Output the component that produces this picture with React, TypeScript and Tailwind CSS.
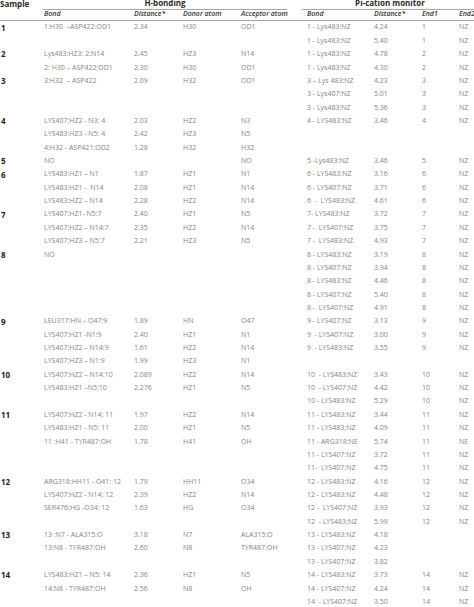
import React from "react";

const cols = "grid grid-cols-[44px_90px_49px_58px_66px_67px_48px_37px_15px]";

// sample, bond, distance, donor, acceptor, pi bond, pi distance, end1, end2
const rows: string[][] = [
    ["1", "1:H30  \u2013ASP422:OD1", "2.34", "H30", "OD1", "1 - Lys483:NZ", "4.24", "1", "NZ"],
    ["", "", "", "", "", "1 - Lys483:NZ", "5.40", "1", "NZ"],
    ["2", "Lys483:HZ3: 2:N14", "2.45", "HZ3", "N14", "1 - Lys483:NZ", "4.78", "2", "NZ"],
    ["", "2: H30 \u2013 ASP422:OD1", "2.30", "H30", "OD1", "1 - Lys483:NZ", "4.30", "2", "NZ"],
    ["3", "3:H32  \u2013 ASP422", "2.09", "H32", "OD1", "3 \u2013 Lys 483:NZ", "4.23", "3", "NZ"],
    ["", "", "", "", "", "3 - Lys407:NZ", "5.01", "3", "NZ"],
    ["", "", "", "", "", "3 - Lys483:NZ", "5.36", "3", "NZ"],
    ["4", "LYS407:HZ2 - N3: 4", "2.03", "HZ2", "N3", "4 - LYS483:NZ", "3.46", "4", "NZ"],
    ["", "LYS483:HZ3 - N5: 4", "2.42", "HZ3", "N5", "", "", "", ""],
    ["", "4:H32 - ASP421:OD2", "1.28", "H32", "H32", "", "", "", ""],
    ["5", "NO", "", "", "NO", "5 -Lys483:NZ", "3.46", "5", "NZ"],
    ["6", "LYS483:HZ1 \u2013 N1", "1.87", "HZ1", "N1", "6 - LYS483:NZ", "3.16", "6", "NZ"],
    ["", "LYS483:HZ1 -  N14", "2.08", "HZ1", "N14", "6 - LYS407:NZ", "3.71", "6", "NZ"],
    ["", "LYS483:HZ2 \u2013 N14", "2.28", "HZ2", "N14", "6  -  LYS483:NZ", "4.61", "6", "NZ"],
    ["7", "LYS407:HZ1- N5:7", "2.40", "HZ1", "N5", "7- LYS483:NZ", "3.72", "7", "NZ"],
    ["", "LYS407:HZ2 \u2013 N14:7", "2.35", "HZ2", "N14", "7 -  LYS407:NZ", "3.75", "7", "NZ"],
    ["", "LYS407:HZ3 \u2013 N5:7", "2.21", "HZ3", "N5", "7 -  LYS483:NZ", "4.93", "7", "NZ"],
    ["8", "NO", "", "", "", "8 - LYS483:NZ", "3.19", "8", "NZ"],
    ["", "", "", "", "", "8 - LYS407:NZ", "3.94", "8", "NZ"],
    ["", "", "", "", "", "8 - LYS483:NZ", "4.46", "8", "NZ"],
    ["", "", "", "", "", "8 - LYS407:NZ", "5.40", "8", "NZ"],
    ["", "", "", "", "", "8 -  LYS407:NZ", "4.91", "8", "NZ"],
    ["9", "LEU317:HN \u2013 O47:9", "1.89", "HN", "O47", "9 - LYS407:NZ", "3.13", "9", "NZ"],
    ["", "LYS407:HZ1 -N1:9", "2.40", "HZ1", "N1", "9  - LYS407:NZ", "3.00", "9", "NZ"],
    ["", "LYS407:HZ2 \u2013 N14:9", "1.61", "HZ2", "N14", "9  - LYS483:NZ", "3.55", "9", "NZ"],
    ["", "LYS407:HZ3 \u2013 N1:9", "1.99", "HZ3", "N1", "", "", "", ""],
    ["10", "LYS407:HZ2 \u2013 N14:10", "2.089", "HZ2", "N14", "10  - LYS483:NZ", "3.43", "10", "NZ"],
    ["", "LYS483:HZ1 \u2013N5:10", "2.276", "HZ1", "N5", "10  - LYS407:NZ", "4.42", "10", "NZ"],
    ["", "", "", "", "", "10 - LYS483:NZ", "5.29", "10", "NZ"],
    ["11", "LYS407:HZ2 - N14: 11", "1.97", "HZ2", "N14", "11 - LYS483:NZ", "3.44", "11", "NZ"],
    ["", "LYS483:HZ1 - N5: 11", "2.00", "HZ1", "N5", "11 - LYS483:NZ", "4.09", "11", "NZ"],
    ["", "11 :H41 - TYR487:OH", "1.78", "H41", "OH", "11 - ARG318:NE", "5.74", "11", "NE"],
    ["", "", "", "", "", "11 - LYS407:NZ", "3.72", "11", "NZ"],
    ["", "", "", "", "", "11-  LYS407:NZ", "4.75", "11", "NZ"],
    ["12", "ARG318:HH11 - O41: 12", "1.79", "HH11", "O34", "12 - LYS483:NZ", "4.16", "12", "NZ"],
    ["", "LYS407:HZ2 - N14: 12", "2.39", "HZ2", "N14", "12 - LYS483:NZ", "4.48", "12", "NZ"],
    ["", "SER476:HG -O34: 12", "1.63", "HG", "O34", "12 -  LYS407:NZ", "3.93", "12", "NZ"],
    ["", "", "", "", "", "12  - LYS483:NZ", "5.99", "12", "NZ"],
    ["13", "13 :N7 - ALA315:O", "3.18", "N7", "ALA315:O", "13 - LYS483:NZ", "4.18", "", ""],
    ["", "13:N8 - TYR487:OH", "2.60", "N8", "TYR487:OH", "13 - LYS407:NZ", "4.23", "", ""],
    ["", "", "", "", "", "13 - LYS407:NZ", "3.82", "", ""],
    ["14", "LYS483:HZ1 \u2013 N5: 14", "2.36", "HZ1", "N5", "14 - LYS483:NZ", "3.73", "14", "NZ"],
    ["", "14:N8 - TYR487:OH", "2.56", "N8", "OH", "14 - LYS407:NZ", "4.24", "14", "NZ"],
    ["", "", "", "", "", "14  - LYS407:NZ", "3.50", "14", "NZ"],
];

const subHeads = ["", "Bond", "Distance*", "Donor atom", "Acceptor atom", "Bond", "Distance*", "End1", "End2"];

export default function App() {
    return (
        <div className="w-[474px] h-[607px] overflow-hidden bg-white font-['Open_Sans',sans-serif]">
            <div className="-mt-[3px]">
                {/* group headers, top edge cropped like the source */}
                <div className={`${cols} h-[12px] items-center text-[8px] font-bold text-[#2b2b2b]`}>
                    <div className="whitespace-nowrap">Sample</div>
                    <div className="col-span-4 -ml-[1px] mr-[20px] self-stretch flex items-center justify-center border-b border-[#a8a8a8]">
                        H-bonding
                    </div>
                    <div className="col-span-4 -ml-[5px] self-stretch flex items-center justify-center border-b border-[#a8a8a8] whitespace-nowrap pl-[4px]">
                        Pi-cation monitor
                    </div>
                </div>

                {/* column headers */}
                <div className={`${cols} h-[12px] items-center border-b border-[#a8a8a8] text-[7px] italic font-semibold text-[#333]`}>
                    {subHeads.map((h, i) => (
                        <div key={i} className="whitespace-nowrap">{h}</div>
                    ))}
                </div>

                {/* data rows */}
                <div>
                    {rows.map((r, i) => (
                        <div key={i} className={`${cols} h-[13.37px] items-center text-[7px] text-[#858585]`}>
                            {r.map((c, j) => (
                                <div
                                    key={j}
                                    className={
                                        j === 0
                                            ? "pl-[1px] text-[8px] font-bold text-[#222]"
                                            : "whitespace-pre"
                                    }
                                >
                                    {c}
                                </div>
                            ))}
                        </div>
                    ))}
                </div>
            </div>
        </div>
    );
}
